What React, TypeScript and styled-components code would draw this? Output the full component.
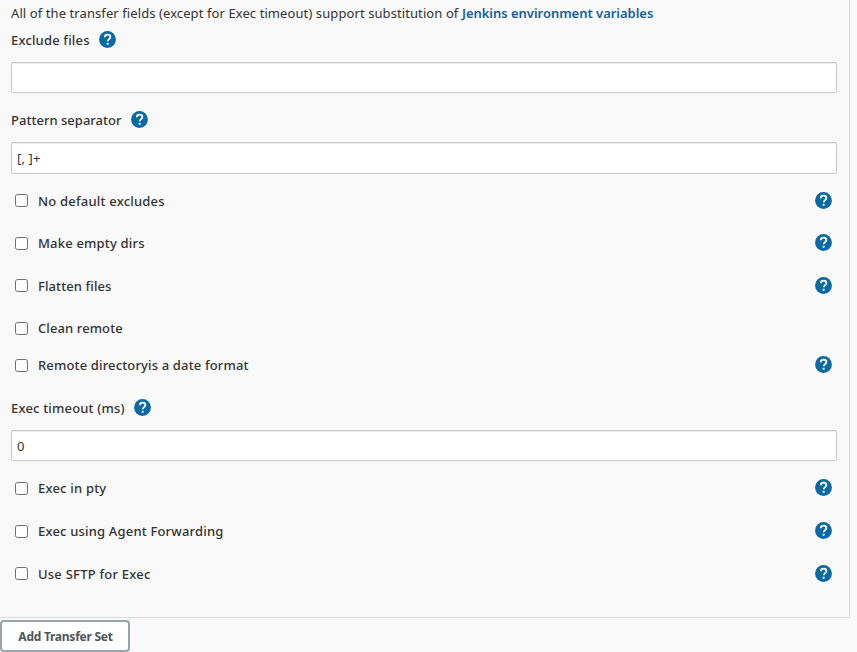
import React from "react";
import styled, { createGlobalStyle } from "styled-components";

const Global = createGlobalStyle`
  * { box-sizing: border-box; }
  body { margin: 0; background: #f9f9f9; overflow: hidden; }
  body, input, button { font-family: "Noto Sans", "Open Sans", sans-serif; color: #333; }
`;

const Page = styled.main`
  width: 857px;
  height: 652px;
  background: #f9f9f9;
`;

const Panel = styled.section`
  width: 850px;
  height: 618px;
  padding: 0 12px 0 11px;
  border-right: 1px solid #dcdcdc;
  border-bottom: 1px solid #dcdcdc;
`;

const Intro = styled.p`
  margin: 0;
  height: 27px;
  line-height: 27px;
  font-size: 13px;
  letter-spacing: 0.09px;
  white-space: nowrap;
`;

const Link = styled.a`
  color: #14609b;
  font-weight: 600;
  letter-spacing: -0.03px;
  text-decoration: none;
`;

const Text = styled.span<{ $track?: number; $lift?: number }>`
  font-size: 13px;
  font-weight: 500;
  line-height: 18px;
  margin-bottom: ${(p) => (p.$lift ?? 0) * 2}px;
  letter-spacing: ${(p) => p.$track ?? 0}px;
  white-space: nowrap;
`;

const FieldLabel = styled.div<{ $top: number }>`
  display: flex;
  align-items: center;
  gap: 9px;
  height: 26px;
  margin-top: ${(p) => p.$top}px;
  margin-bottom: 9px;
`;

const Input = styled.input<{ $height: number }>`
  display: block;
  width: 826px;
  height: ${(p) => p.$height}px;
  padding: 0 5px;
  border: 1px solid #c8c8c8;
  border-radius: 2px;
  background: #fff;
  box-shadow: inset 0 1px 1px rgba(0, 0, 0, 0.075);
  font-size: 13px;
  letter-spacing: 0.15px;
  outline: none;
`;

const Options = styled.div<{ $top: number }>`
  padding-top: ${(p) => p.$top}px;
`;

const Option = styled.div<{ $height: number }>`
  height: ${(p) => p.$height}px;
  padding: 0 5.5px 0 4px;
`;

const OptionLine = styled.div`
  display: flex;
  align-items: center;
  justify-content: space-between;
  height: 14px;
`;

const OptionLabel = styled.label`
  display: flex;
  align-items: center;
  gap: 10px;
`;

const Checkbox = styled.input`
  appearance: none;
  width: 13px;
  height: 13px;
  margin: 0 0 1px;
  border: 1px solid #6f6f6f;
  border-radius: 2.5px;
  background: #fff;
`;

const HelpSvg = styled.svg<{ $shift?: number }>`
  display: block;
  flex: none;
  width: 17px;
  height: 17px;
  margin-top: ${(p) => p.$shift ?? -2}px;
`;

const AddButton = styled.button`
  display: block;
  width: 130px;
  height: 32px;
  margin-top: 2px;
  padding: 0 0 0 1px;
  border: 2px solid #98a4ad;
  border-radius: 4px;
  background: #fff;
  color: #4d545d;
  font-size: 12px;
  font-weight: 700;
  letter-spacing: -0.25px;
  white-space: nowrap;
`;

function Help({ shift }: { shift?: number }) {
  return (
    <HelpSvg $shift={shift} viewBox="0 0 17 17" aria-label="Help">
      <circle cx="8.5" cy="8.5" r="8.4" fill="#0b6aa2" />
      <path
        d="M5.8 6.3C5.8 4.6 7 3.7 8.6 3.7s2.8.9 2.8 2.4c0 2-2.7 2.1-2.7 4.2"
        fill="none"
        stroke="#fff"
        strokeWidth="1.75"
      />
      <rect x="7.7" y="11.8" width="1.9" height="1.9" fill="#fff" />
    </HelpSvg>
  );
}

type OptionData = {
  label: string;
  height: number;
  help?: boolean;
  shift?: number;
  track?: number;
  lift?: number;
};

const fileOptions: OptionData[] = [
  { label: "No default excludes", height: 43, help: true, track: 0.2 },
  { label: "Make empty dirs", height: 42, help: true, shift: -4, track: 0.19, lift: 1 },
  { label: "Flatten files", height: 43, help: true, track: 0.1 },
  { label: "Clean remote", height: 37, track: 0.1, lift: 1 },
  { label: "Remote directoryis a date format", height: 14, help: true, shift: -4, track: 0.15, lift: 1 },
];

const execOptions: OptionData[] = [
  { label: "Exec in pty", height: 43, help: true, shift: -4, track: 0.2, lift: 1 },
  { label: "Exec using Agent Forwarding", height: 42, help: true, shift: -4, track: 0.18, lift: 1 },
  { label: "Use SFTP for Exec", height: 14, help: true, track: 0.23 },
];

function OptionList({ items, top }: { items: OptionData[]; top: number }) {
  return (
    <Options $top={top}>
      {items.map((o) => (
        <Option key={o.label} $height={o.height}>
          <OptionLine>
            <OptionLabel>
              <Checkbox type="checkbox" />
              <Text $track={o.track} $lift={o.lift}>{o.label}</Text>
            </OptionLabel>
            {o.help && <Help shift={o.shift} />}
          </OptionLine>
        </Option>
      ))}
    </Options>
  );
}

type FieldProps = { label: string; value: string; top: number; height: number; track?: number };

function Field({ label, value, top, height, track }: FieldProps) {
  return (
    <>
      <FieldLabel $top={top}>
        <Text $track={track}>{label}</Text>
        <Help />
      </FieldLabel>
      <Input $height={height} defaultValue={value} aria-label={label} />
    </>
  );
}

export default function App() {
  return (
    <Page>
      <Global />
      <Panel>
        <Intro>
          All of the transfer fields (except for Exec timeout) support substitution of{" "}
          <Link>Jenkins environment variables</Link>
        </Intro>
        <Field label="Exclude files" value="" top={0} height={31} track={0.17} />
        <Field label="Pattern separator" value="[, ]+" top={14} height={32} track={0.02} />
        <OptionList items={fileOptions} top={20} />
        <Field label="Exec timeout (ms)" value="0" top={22} height={31} track={0.18} />
        <OptionList items={execOptions} top={21} />
      </Panel>
      <AddButton type="button">Add Transfer Set</AddButton>
    </Page>
  );
}
